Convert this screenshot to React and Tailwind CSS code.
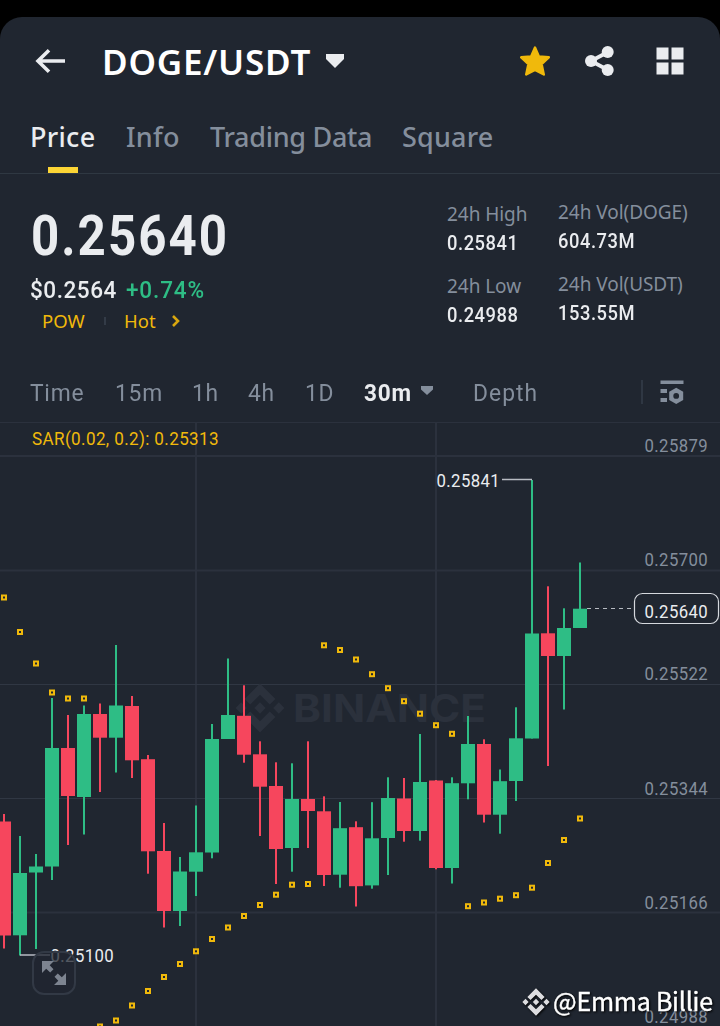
const TABS = [
  { label: 'Price', cls: 'w-[96px] tracking-[0.3px] text-[#eaecef]', active: true },
  { label: 'Info', cls: 'w-[84px] tracking-[0.3px] text-[#848e9c]' },
  { label: 'Trading Data', cls: 'w-[192px] tracking-[-0.3px] text-[#848e9c]' },
  { label: 'Square', cls: 'w-[100px] tracking-[0.2px] text-[#848e9c]' },
];

const INTERVALS = [
  { label: 'Time', cls: 'w-[85px]' },
  { label: '15m', cls: 'w-[77px]' },
  { label: '1h', cls: 'w-[56px]' },
  { label: '4h', cls: 'w-[57px]' },
  { label: '1D', cls: 'w-[59px]' },
];

const GREEN = '#2ebd85';
const RED = '#f6465d';

// [high, body top, body bottom, low, up], one candle every 16px
const CANDLES = [
  [814, 821.5, 935.5, 948.5, 0],
  [836, 873, 935.3, 955.5, 1],
  [854, 866.5, 872.5, 949, 1],
  [698, 748, 866.5, 880, 1],
  [715, 748, 796, 845, 0],
  [705.5, 714, 797, 834.5, 1],
  [703.5, 714, 737.7, 792, 0],
  [645, 705.5, 737.7, 772.5, 1],
  [696, 706, 760.3, 778, 0],
  [755, 759.2, 851.3, 873.7, 0],
  [823, 851, 911, 927.5, 0],
  [857, 871.5, 911, 926, 1],
  [805.5, 852.3, 871.7, 896, 1],
  [724, 739, 852.5, 858.3, 1],
  [658.5, 715, 739, 739, 1],
  [685.3, 715.8, 754.7, 762.7, 0],
  [741.3, 754.3, 786.7, 836, 0],
  [762.3, 786, 849, 884, 0],
  [763.3, 799, 848, 871.7, 1],
  [741.3, 799, 811, 848, 0],
  [796.3, 811.3, 875, 886, 0],
  [802, 828.2, 874.7, 887.7, 1],
  [821.3, 827.2, 886.2, 906.5, 0],
  [802.2, 838.3, 885.4, 888.7, 1],
  [777.3, 798, 838, 875, 1],
  [778, 798.5, 831, 841.7, 0],
  [734, 782, 831, 840.7, 1],
  [780, 780.5, 868, 869.3, 0],
  [777.3, 783.2, 868, 883.5, 1],
  [716, 744, 783.3, 799.3, 1],
  [739.3, 744, 814.7, 822.5, 0],
  [769.5, 781.2, 814.7, 833.7, 1],
  [707.3, 738.3, 781, 801, 1],
  [480, 633.5, 738.5, 738.5, 1],
  [586.3, 633.3, 656, 766, 0],
  [608.3, 628, 656, 709.5, 1],
  [562.5, 608.7, 628, 628, 1],
];

const SAR = [
  597.5, 632, 663.5, 692.5, 698.5, 698.5, 1026.5, 1020.5, 1005.5, 991, 977, 964, 951.3, 939, 927.5,
  916, 905, 894.7, 884.7, 884, 645.3, 650, 659.5, 674.2, 688.2, 701.2, 713.7, 725.2, 733.8, 906.2,
  902.5, 898.7, 895.2, 887.7, 863, 840, 818.5,
];

const AXIS = [
  { label: '0.25879', y: 452 },
  { label: '0.25700', y: 566 },
  { label: '0.25522', y: 680 },
  { label: '0.25344', y: 795 },
  { label: '0.25166', y: 909 },
  { label: '0.24988', y: 1023 },
];

function BinanceMark() {
  return (
    <path d="M6.8 10.2 12 5 17.2 10.2 20.2 7.2 12 -1 3.8 7.2ZM-1 12 2 9 5 12 2 15ZM6.8 13.8 12 19 17.2 13.8 20.2 16.8 12 25 3.8 16.8ZM19 12 22 9 25 12 22 15ZM9 12 12 9 15 12 12 15Z" />
  );
}

// Narrowed numerals: glyphs squeezed a little, with the spacing opened up again
function Num({ x, y, children, ...rest }) {
  return (
    <text transform={`translate(${x} ${y}) scale(0.93 1)`} textLength="68" {...rest}>
      {children}
    </text>
  );
}

function Header() {
  return (
    <header className="flex h-[88px] items-center pl-[35px] pr-[36px] text-[#eaecef]">
      <svg className="h-6 w-[30px]" viewBox="0 0 30 24" fill="none" stroke="currentColor" strokeWidth="3.6">
        <path d="M30 12H3M14 1.3 3 12 14 22.7" />
      </svg>
      <h1 className="ml-[37px] mt-px w-[224px] whitespace-nowrap font-['Noto_Sans'] text-[35px] font-semibold leading-none tracking-[0.8px] text-white">
        DOGE/USDT
      </h1>
      <svg className="mt-[-1px] h-[14px] w-[18px]" viewBox="0 0 18 14" fill="currentColor">
        <path d="M0 0H18V5L9 14 0 5Z" />
      </svg>
      <div className="ml-auto flex items-center">
        <svg className="h-[30px] w-[30px] text-[#f0b90b]" viewBox="0 0 30 30" fill="currentColor">
          <path
            d="M15 1.5 18.9 10.5 28.8 11.3 21.6 18 23.8 28.5 15 24 6.2 28.5 8.4 18 1.2 11.3 11.1 10.5Z"
            stroke="currentColor"
            strokeWidth="2.4"
            strokeLinejoin="round"
          />
        </svg>
        <svg className="ml-[35px] h-[30px] w-[29px]" viewBox="0 0 29 30" fill="currentColor">
          <path d="M23 6 6 15 23 24" fill="none" stroke="currentColor" strokeWidth="3.8" />
          <circle cx="6" cy="15" r="6" />
          <circle cx="22.7" cy="6" r="6" />
          <circle cx="22.7" cy="24" r="6" />
        </svg>
        <svg className="ml-[42px] h-[28px] w-[28px]" viewBox="0 0 28 28" fill="currentColor">
          <path d="M0.5 .5H12.5V12.5H0.5ZM15.5 .5H27.5V12.5H15.5ZM0.5 15.5H12.5V27.5H0.5ZM15.5 15.5H27.5V27.5H15.5Z" />
        </svg>
      </div>
    </header>
  );
}

function Tabs() {
  return (
    <nav className="flex h-[69px] border-b border-[#2f3842] pl-[30px] font-['Noto_Sans'] text-[27px] font-medium leading-[64px]">
      {TABS.map(tab => (
        <div key={tab.label} className={`relative shrink-0 whitespace-nowrap ${tab.cls}`}>
          {tab.label}
          {tab.active && <span className="absolute bottom-0 left-[18px] h-[6px] w-[30px] bg-[#fcd535]" />}
        </div>
      ))}
    </nav>
  );
}

function Stat({ label, value }) {
  return (
    <div className="h-[72px]">
      <div className="whitespace-nowrap font-['Noto_Sans'] text-[19px] leading-[28px] tracking-[-0.05px] text-[#848e9c]">
        {label}
      </div>
      <div className="origin-left scale-x-[0.94] font-['Roboto'] text-[19.5px] font-medium leading-[31px] tracking-[0.6px] text-[#eaecef]">
        {value}
      </div>
    </div>
  );
}

function Summary() {
  return (
    <section className="flex h-[188px] pl-[30px]">
      <div className="w-[417px] pt-[32px]">
        <div className="origin-left whitespace-nowrap font-['Roboto'] text-[56px] font-bold leading-[60px] tracking-[2.3px] text-[#eaecef]">
          <div className="ml-px w-[225px] origin-left scale-x-[0.88]">0.25640</div>
        </div>
        <div className="mt-[8px] flex font-['Roboto'] text-[24px] font-medium leading-[32px]">
          <span className="w-[96px] origin-left scale-x-[0.94] tracking-[0.55px] text-[#eaecef]">$0.2564</span>
          <span className="origin-left scale-x-[0.94] tracking-[0.9px] text-[#2ebd85]">+0.74%</span>
        </div>
        <div className="flex items-center pl-[12px] font-['Noto_Sans'] text-[18.5px] leading-[30px] text-[#f0b90b]">
          <span className="w-[62px]">POW</span>
          <span className="h-[8px] w-[2px] bg-[#333b47]" />
          <span className="ml-[18px] w-[48px]">Hot</span>
          <svg className="h-[12px] w-[8px]" viewBox="0 0 8 12" fill="none" stroke="#d9a70f" strokeWidth="2.6">
            <path d="M1 1 6 6 1 11" />
          </svg>
        </div>
      </div>
      <div className="w-[111px] pt-[26px]">
        <Stat label="24h High" value="0.25841" />
        <Stat label="24h Low" value="0.24988" />
      </div>
      <div className="pt-[24px]">
        <Stat label="24h Vol(DOGE)" value="604.73M" />
        <Stat label="24h Vol(USDT)" value="153.55M" />
      </div>
    </section>
  );
}

function IntervalBar() {
  return (
    <div className="flex h-[60px] items-center pl-[30px] pr-[36px] pt-px font-['Roboto'] text-[24px] text-[#848e9c]">
      {INTERVALS.map(item => (
        <span key={item.label} className={`shrink-0 origin-left scale-x-[0.95] tracking-[0.8px] ${item.cls}`}>
          {item.label}
        </span>
      ))}
      <span className="w-[57px] origin-left scale-x-[0.94] font-bold tracking-[0.8px] text-[#eaecef]">30m</span>
      <svg className="mt-[-4px] h-[9px] w-[12px]" viewBox="0 0 12 9" fill="currentColor">
        <path d="M0 0H12V3.5L6 9 0 3.5Z" />
      </svg>
      <span className="ml-[40px] origin-left scale-x-[0.95] tracking-[1.1px]">Depth</span>
      <span className="ml-auto mt-[-2px] h-6 w-[2px] bg-[#2f3743]" />
      <svg className="ml-[17px] mt-[-2px] h-6 w-6" viewBox="0 0 24 24" fill="currentColor">
        <path d="M0.5 0.5H23.5V4H0.5ZM0.5 9H7V13H0.5ZM0.5 18H7V22H0.5Z" />
        <path fillRule="evenodd" d="M16.2 7.8 23.2 11.8V20L16.2 24 9.2 20V11.8ZM16.2 13a2.9 2.9 0 1 0 0 5.8 2.9 2.9 0 0 0 0-5.8Z" />
      </svg>
    </div>
  );
}

function Chart() {
  return (
    <svg className="block h-[604px] w-[720px] font-['Roboto']" viewBox="0 422 720 604" fontSize="18">
      <g stroke="#2b313d">
        <path strokeWidth="2" d="M0 422H720M0 456H720M0 570.5H720M0 912.5H720M196 422V1026M436 422V1026" />
        <path d="M0 684.5H720M0 798.5H720" stroke="#303743" />
      </g>

      <g fill="#2b313c">
        <g transform="translate(260 708) scale(1.88) translate(-12 -12)">
          <BinanceMark />
        </g>
        <text x="293" y="722" fontSize="38" fontWeight="700" textLength="193" lengthAdjust="spacingAndGlyphs" className="font-['Inter']">
          BINANCE
        </text>
      </g>

      <g fill="#848e9c">
        {AXIS.map(tick => (
          <Num key={tick.y} x={644.5} y={tick.y}>
            {tick.label}
          </Num>
        ))}
      </g>
      <text transform="translate(32 445) scale(0.95 1)" fill="#f0b90b" textLength="196.5">
        SAR(0.02, 0.2): 0.25313
      </text>

      {CANDLES.map(([high, top, bottom, low, up], i) => (
        <g key={i} fill={up ? GREEN : RED}>
          <rect x={3 + i * 16} y={high} width="2" height={low - high} />
          <rect x={-3 + i * 16} y={top} width="14" height={bottom - top} />
        </g>
      ))}
      <g fill="#202630" stroke="#f0b90b" strokeWidth="2">
        {SAR.map((y, i) => (
          <rect key={i} x={2 + i * 16} y={y - 2} width="4" height="4" />
        ))}
      </g>

      <g fill="#eaecef">
        <Num x={436.5} y={487}>0.25841</Num>
        <Num x={50.5} y={962}>0.25100</Num>
        <path d="M502 479.5H532M20 955H50" stroke="#b7bbc2" strokeWidth="1.3" />
      </g>

      <path d="M587 608.5H632" stroke="#b7bbc2" strokeDasharray="4 4" />
      <rect x="634.5" y="593.5" width="84" height="30" rx="8" fill="#202630" stroke="#d5d8dd" strokeWidth="1.2" />
      <Num x={644.5} y={618} fill="#eaecef">0.25640</Num>

      <rect x="33" y="952" width="42" height="42" rx="11" fill="#202630" fillOpacity="0.75" stroke="#323945" strokeWidth="2" />
      <g fill="#7d8490">
        <path d="M42 961H54L49.7 965.3 53.5 969.3 50.2 972.5 46.2 968.7 42 973Z" />
        <path d="M66 985H54L58.3 980.7 54.5 976.7 57.8 973.5 61.8 977.3 66 973Z" />
      </g>

      <g className="drop-shadow-[1px_1px_1px_#000000]">
        <g fill="#dddde0" transform="translate(536 1002) scale(1.05) translate(-12 -12)">
          <BinanceMark />
        </g>
        <text
          x="553"
          y="1011"
          fill="#ffffff"
          stroke="#ffffff"
          strokeWidth="0.4"
          fontSize="25"
          textLength="160"
          className="font-['Noto_Sans_CJK_SC']"
        >
          @Emma Billie
        </text>
      </g>
    </svg>
  );
}

export default function App() {
  return (
    <div className="h-[1026px] w-[720px] overflow-hidden bg-black pt-[17px]">
      <main className="rounded-t-[22px] bg-[#202630]">
        <Header />
        <Tabs />
        <Summary />
        <IntervalBar />
        <Chart />
      </main>
    </div>
  );
}
